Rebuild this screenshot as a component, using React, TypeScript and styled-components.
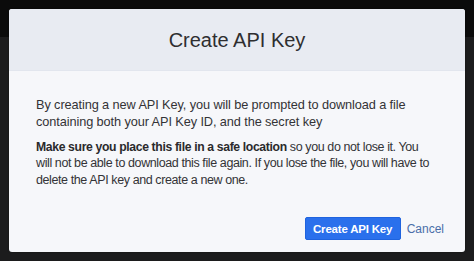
import styled, { createGlobalStyle } from "styled-components";

const GlobalStyle = createGlobalStyle`
	html, body {
		margin: 0;
		padding: 0;
		background: #1c1c1d;
	}
	* {
		box-sizing: border-box;
	}
`;

const Page = styled.div`
	position: relative;
	width: 474px;
	height: 261px;
	overflow: hidden;
	background: #1c1c1d;
	font-family: "Liberation Sans", Arial, sans-serif;
`;

const TopBar = styled.div`
	height: 37px;
	background: #0b0b0b;
`;

const Modal = styled.div`
	position: absolute;
	left: 9px;
	top: 9px;
	width: 456px;
	height: 243px;
	background: #f6f7fa;
	border-radius: 3px;
	box-shadow: 0 0 2px rgba(0, 0, 0, 0.4);
	display: flex;
	flex-direction: column;
	overflow: hidden;
`;

const ModalHeader = styled.header`
	height: 62px;
	flex-shrink: 0;
	background: #e8ebf2;
	border-bottom: 1px solid #e2e6ee;
	display: flex;
	align-items: center;
	justify-content: center;
`;

const Title = styled.h1`
	margin: 0;
	font-size: 20px;
	font-weight: 400;
	color: #2e2e30;
	padding-top: 2px;
`;

const ModalBody = styled.div`
	padding: 26px 29px 0 27px;
	flex: 1;
`;

const Paragraph = styled.p<{ $tight?: boolean }>`
	margin: 0 0 8px 0;
	font-size: ${(props) => (props.$tight ? "12.5px" : "12.75px")};
	letter-spacing: ${(props) => (props.$tight ? "-0.4px" : "-0.1px")};
	line-height: 16.8px;
	color: #333336;
`;

const Strong = styled.b`
	font-size: 12.2px;
	letter-spacing: -0.35px;
	color: #2a2a2c;
`;

const Footer = styled.footer`
	display: flex;
	justify-content: flex-end;
	align-items: center;
	gap: 6px;
	padding: 0 21px 12px 0;
`;

const Button = styled.button<{ $primary?: boolean }>`
	font-family: "Liberation Sans", Arial, sans-serif;
	font-size: ${(props) => (props.$primary ? "11.5px" : "12px")};
	height: 23px;
	border-radius: 2px;
	cursor: pointer;
	white-space: nowrap;
	padding: 0;
	border: ${(props) => (props.$primary ? "1px solid #1f63de" : "none")};
	background: ${(props) => (props.$primary ? "#2a70ec" : "transparent")};
	color: ${(props) => (props.$primary ? "#ffffff" : "#4a6ea8")};
	font-weight: ${(props) => (props.$primary ? 700 : 400)};
	letter-spacing: ${(props) => (props.$primary ? "-0.2px" : "0")};
	width: ${(props) => (props.$primary ? "96px" : "auto")};
`;

function App() {
	return (
		<Page>
			<GlobalStyle />
			<TopBar />
			<Modal>
				<ModalHeader>
					<Title>Create API Key</Title>
				</ModalHeader>
				<ModalBody>
					<Paragraph>
						By creating a new API Key, you will be prompted to download a file
						containing both your API Key ID, and the secret key
					</Paragraph>
					<Paragraph $tight>
						<Strong>Make sure you place this file in a safe location</Strong> so
						you do not lose it. You will not be able to download this file again.
						If you lose the file, you will have to delete the API key and create
						a new one.
					</Paragraph>
				</ModalBody>
				<Footer>
					<Button $primary>Create API Key</Button>
					<Button>Cancel</Button>
				</Footer>
			</Modal>
		</Page>
	);
}

export default App;
